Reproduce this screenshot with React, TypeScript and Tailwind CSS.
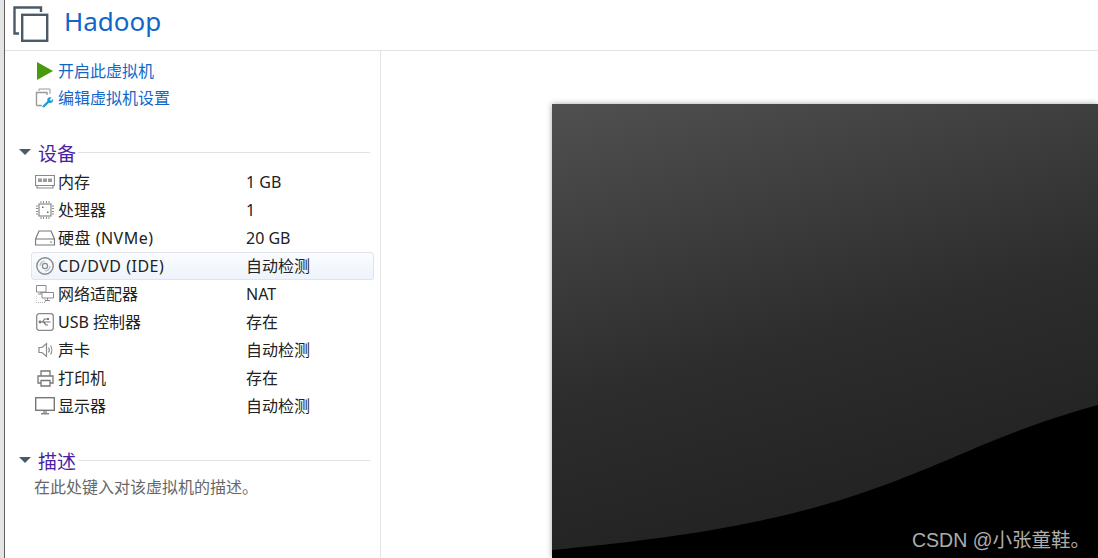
const font = { fontFamily: '"Noto Sans", "Noto Sans CJK SC", sans-serif' };

function CopyIcon() {
  return (
    <svg width="36" height="36" viewBox="0 0 36 36" fill="none" stroke="#4a5a68" strokeWidth="2.4">
      <path d="M6 27.5H1.5V1.5H28V6" />
      <rect x="9.2" y="8.8" width="25" height="26" />
    </svg>
  );
}

function EditIcon() {
  return (
    <svg width="20" height="20" viewBox="0 0 20 20" fill="none">
      <path d="M4 3V1H15V6" stroke="#999" strokeWidth="1" />
      <path d="M1.5 17.5V4.5H12V7M1.5 17.5H7" stroke="#999" strokeWidth="1.4" />
      <path d="M7 18.5 L12.5 13 C11.5 10.5 14 8.5 16.5 9.5 L14.6 11.5 L16 13 L18 11 C18.8 13.5 16.5 15.6 14 14.8 L9 19.5 Z" fill="#1a9ad6" />
    </svg>
  );
}

function RowIcon({ name }: { name: string }) {
  const s = { stroke: '#8a8a8a', strokeWidth: 1.2, fill: 'none' };
  if (name === 'memory')
    return (
      <svg width="20" height="14" viewBox="0 0 20 14">
        <path d="M.5.5H19.5V10.5H.5ZM2 10.5V13H18V10.5" {...s} />
        <path d="M3 3.5H7V7H3ZM8 3.5H12V7H8ZM13 3.5H17V7H13Z" fill="#9a9a9a" />
      </svg>
    );
  if (name === 'cpu')
    return (
      <svg width="18" height="18" viewBox="0 0 18 18">
        <rect x="3" y="3" width="12" height="12" {...s} />
        <path d="M5 0V2M7.5 0V2M10.5 0V2M13 0V2M5 16V18M7.5 16V18M10.5 16V18M13 16V18M0 5H2M0 7.5H2M0 10.5H2M0 13H2M16 5H18M16 7.5H18M16 10.5H18M16 13H18" {...s} strokeWidth="1" />
        <path d="M6 5.5H7.5V7H6ZM11 10.5H12.5V12H11Z" fill="#666" />
      </svg>
    );
  if (name === 'disk')
    return (
      <svg width="20" height="16" viewBox="0 0 20 16">
        <path d="M4 1H16L19.5 9V15H.5V9ZM.5 9H19.5" {...s} stroke="#777" />
        <path d="M15 12H17" stroke="#777" strokeWidth="1.2" />
      </svg>
    );
  if (name === 'cd')
    return (
      <svg width="18" height="18" viewBox="0 0 18 18">
        <circle cx="9" cy="9" r="8.2" {...s} strokeWidth="1.4" />
        <circle cx="9" cy="9" r="2.6" {...s} />
        <path d="M4 9A5 5 0 0 1 9 4M14 9A5 5 0 0 1 9 14" {...s} stroke="#bbb" />
      </svg>
    );
  if (name === 'network')
    return (
      <svg width="18" height="18" viewBox="0 0 18 18">
        <path d="M.5.5H10V7H.5ZM6 7.5H17.5V13H6ZM11.5 13V15M9 15.5H14M5 7V9H2" {...s} strokeWidth="1" />
        <path d="M0 17.5H9M0 11V17M9 14V17" stroke="#aaa" strokeWidth="1" strokeDasharray="1 1" fill="none" />
      </svg>
    );
  if (name === 'usb')
    return (
      <svg width="18" height="18" viewBox="0 0 18 18">
        <rect x=".7" y=".7" width="16.6" height="16.6" rx="2.5" {...s} strokeWidth="1.3" />
        <path d="M3.5 9H14.5M6.5 9L8.5 6H11M7.5 9L10 12H12" stroke="#777" strokeWidth="1.2" fill="none" />
        <circle cx="4" cy="9" r="1.4" fill="#777" />
        <rect x="11" y="5" width="2" height="2" fill="#777" />
      </svg>
    );
  if (name === 'sound')
    return (
      <svg width="15" height="16" viewBox="0 0 15 16">
        <path d="M1 5.5H4L8.5 1.5V14.5L4 10.5H1Z" {...s} />
        <path d="M10.5 5.5C11.5 7 11.5 9 10.5 10.5M12.5 3.5C14.2 6 14.2 10 12.5 12.5" {...s} />
      </svg>
    );
  if (name === 'printer')
    return (
      <svg width="17" height="17" viewBox="0 0 17 17">
        <path d="M4 6V1H13V6M4 13H1V6H16V13H13M4 10.5H13V16H4Z" {...s} stroke="#777" strokeWidth="1.3" />
      </svg>
    );
  return (
    <svg width="20" height="18" viewBox="0 0 20 18">
      <rect x=".7" y=".7" width="18.6" height="12.6" {...s} stroke="#777" strokeWidth="1.4" />
      <path d="M6 16H14V17.5H6Z" fill="#888" />
      <path d="M8 14H12V16H8Z" fill="#aaa" />
    </svg>
  );
}

function SectionTitle({ title }: { title: string }) {
  return (
    <div className="flex h-6 items-start">
      <div className="mt-[8px] ml-[14px] h-0 w-0 border-x-[6px] border-t-[6px] border-x-transparent border-t-[#4a5a68]" />
      <span className="ml-[7px] pt-[1px] text-[19px] leading-6 text-[#4b1fa5]">{title}</span>
      <div className="mt-[11px] ml-[2px] h-px w-[292px] bg-[#e2e2e2]" />
    </div>
  );
}

const devices = [
  { icon: 'memory', name: '内存', value: '1 GB' },
  { icon: 'cpu', name: '处理器', value: '1' },
  { icon: 'disk', name: '硬盘 (NVMe)', value: '20 GB', nameClass: 'tracking-[0.5px]' },
  { icon: 'cd', name: 'CD/DVD (IDE)', value: '自动检测', selected: true, nameClass: 'tracking-[0.5px]' },
  { icon: 'network', name: '网络适配器', value: 'NAT' },
  { icon: 'usb', name: 'USB 控制器', value: '存在' },
  { icon: 'sound', name: '声卡', value: '自动检测' },
  { icon: 'printer', name: '打印机', value: '存在' },
  { icon: 'display', name: '显示器', value: '自动检测' },
];

export default function App() {
  return (
    <div className="flex h-[558px] w-[1098px] overflow-hidden bg-white" style={font}>
      <div className="w-[5px] shrink-0 border-r border-[#5f5f5f] bg-[#e4e4e4]" />
      <div className="flex min-w-0 flex-1 flex-col">
        {/* Title */}
        <div className="flex h-[51px] shrink-0 items-start border-b border-[#e3e3e3] pl-[8px]">
          <div className="mt-[6px]">
            <CopyIcon />
          </div>
          <span className="mt-[6px] ml-[15px] text-[26px] leading-[30px] text-[#1167c9]">Hadoop</span>
        </div>

        <div className="flex min-h-0 flex-1">
          {/* Sidebar */}
          <div className="w-[376px] shrink-0 border-r border-[#e3e3e3]">
            <div className="flex h-[28px] items-center pt-[12px] pl-[32px]">
              <div className="h-0 w-0 border-y-[9px] border-l-[16px] border-y-transparent border-l-[#4a9a0e]" />
              <span className="ml-[5px] text-[16px] leading-5 text-[#1167c9]">开启此虚拟机</span>
            </div>
            <div className="flex h-[28px] items-center pt-[9px] pl-[30px]">
              <EditIcon />
              <span className="ml-[3px] text-[16px] leading-5 text-[#1167c9]">编辑虚拟机设置</span>
            </div>

            <div className="mt-[34px]">
              <SectionTitle title="设备" />
            </div>
            <div className="mt-[3px] ml-[26px] w-[343px]">
              {devices.map((d) => (
                <div
                  key={d.name}
                  className={`flex h-[28px] items-center border text-[16px] leading-6 text-[#222] ${
                    d.selected
                      ? 'rounded-[3px] border-[#e0e4ea] bg-gradient-to-b from-[#fafcff] to-[#eef4fc]'
                      : 'border-transparent'
                  }`}
                >
                  <div className="flex w-[26px] shrink-0 justify-center">
                    <RowIcon name={d.icon} />
                  </div>
                  <span className={`w-[188px] shrink-0 whitespace-nowrap ${d.nameClass ?? ''}`}>{d.name}</span>
                  <span className="whitespace-nowrap">{d.value}</span>
                </div>
              ))}
            </div>

            <div className="mt-[29px]">
              <SectionTitle title="描述" />
            </div>
            <p className="mt-[4px] ml-[29px] text-[16px] leading-5 text-[#666]">在此处键入对该虚拟机的描述。</p>
          </div>

          {/* Preview */}
          <div className="min-w-0 flex-1 pt-[53px] pl-[171px]">
            <div className="relative h-[454px] w-[546px] overflow-hidden bg-[linear-gradient(165deg,#505050,#2d2d2d_50%,#1c1c1c)] shadow-[0_0_6px_rgba(0,0,0,0.35)]">
              <svg className="absolute inset-0" width="546" height="454" viewBox="0 0 546 454">
                <path d="M0 446 C90 437 200 425 298 393 S440 330 546 301 V454 H0 Z" fill="#000" />
              </svg>
              <span
                className="absolute right-[8px] bottom-[6px] text-[19.5px] leading-6 whitespace-nowrap text-[#adadad]"
                style={{ fontFamily: '"Liberation Sans", "Noto Sans CJK SC", sans-serif' }}
              >
                CSDN @小张童鞋。
              </span>
            </div>
          </div>
        </div>
      </div>
    </div>
  );
}
